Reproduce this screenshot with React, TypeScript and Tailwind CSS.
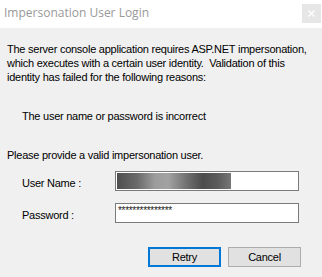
export default function App() {
  return (
    <div className="w-[322px] h-[277px] bg-[#f0f0f0] flex flex-col overflow-hidden text-[11px] leading-[14px] tracking-[-0.25px] text-black font-['Liberation_Sans',Arial,sans-serif]">
      <div className="h-[28px] bg-white flex items-start justify-between shrink-0">
        <span className="pl-[4px] pt-[5px] text-[12px] leading-[16px] tracking-normal text-[#999999] font-['Open_Sans','Noto_Sans',sans-serif]">
          Impersonation User Login
        </span>
        <div className="mt-[4px] mr-[1px] w-[19px] h-[19px] bg-[#e6e6e6] flex items-center justify-center">
          <svg width="7" height="7" viewBox="0 0 7 7">
            <path d="M0.5 0.5 L6.5 6.5 M6.5 0.5 L0.5 6.5" stroke="#ffffff" strokeWidth="1.3" />
          </svg>
        </div>
      </div>

      <div className="flex flex-col px-[7px] pt-[14px]">
        <p className="whitespace-nowrap">
          The server console application requires ASP.NET impersonation,
          <br />
          which executes with a certain user identity.&nbsp; Validation of this
          <br />
          identity has failed for the following reasons:
        </p>
        <p className="mt-[25px] pl-[15px]">The user name or password is incorrect</p>
        <p className="mt-[25px]">Please provide a valid impersonation user.</p>

        <div className="mt-[9px] pl-[15px] flex items-center">
          <span className="w-[93px] pt-[3px]">User Name :</span>
          <div className="w-[184px] h-[20px] border border-[#7a7a7a] bg-white p-[1px]">
            <div className="w-[114px] h-full bg-[linear-gradient(90deg,#4e4e4e_0%,#6a6a6a_18%,#9c9c9c_33%,#a2a2a2_45%,#6e6e6e_62%,#4c4c4c_75%,#5a5a5a_88%,#767676_100%)]" />
          </div>
        </div>

        <div className="mt-[12px] pl-[15px] flex items-center">
          <span className="w-[93px] pt-[3px]">Password :</span>
          <div className="w-[184px] h-[20px] border border-[#7a7a7a] bg-white pl-[2px] text-[10px] leading-[14px] tracking-[-0.3px] text-[#1a1a1a]">
            ***************
          </div>
        </div>

        <div className="mt-[24px] flex justify-end gap-[7px] pr-[14px]">
          <button className="w-[73px] h-[20px] bg-[#e1e1e1] border-2 border-[#0078d7] flex items-center justify-center text-[11px]">
            Retry
          </button>
          <button className="w-[73px] h-[20px] bg-[#e1e1e1] border border-[#adadad] flex items-center justify-center text-[11px]">
            Cancel
          </button>
        </div>
      </div>
    </div>
  );
}
